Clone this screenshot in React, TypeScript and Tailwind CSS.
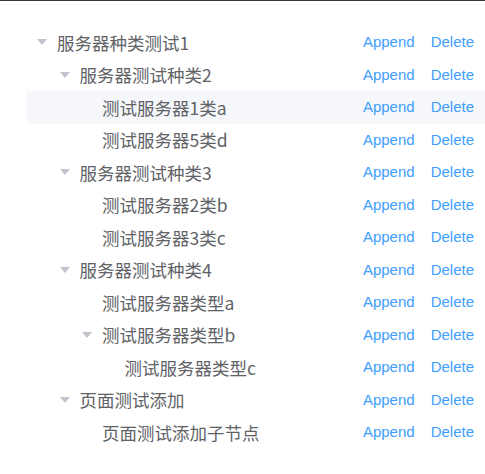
import React from "react";

type TreeNode = {
  label: string;
  children?: TreeNode[];
};

const data: TreeNode[] = [
  {
    label: "服务器种类测试1",
    children: [
      {
        label: "服务器测试种类2",
        children: [{ label: "测试服务器1类a" }, { label: "测试服务器5类d" }],
      },
      {
        label: "服务器测试种类3",
        children: [{ label: "测试服务器2类b" }, { label: "测试服务器3类c" }],
      },
      {
        label: "服务器测试种类4",
        children: [
          { label: "测试服务器类型a" },
          {
            label: "测试服务器类型b",
            children: [{ label: "测试服务器类型c" }],
          },
        ],
      },
      {
        label: "页面测试添加",
        children: [{ label: "页面测试添加子节点" }],
      },
    ],
  },
];

const HOVERED = "测试服务器1类a";

// flatten the expanded tree into rows with their depth
const flatten = (nodes: TreeNode[], level = 0): { node: TreeNode; level: number }[] =>
  nodes.flatMap((node) => [
    { node, level },
    ...(node.children ? flatten(node.children, level + 1) : []),
  ]);

const Caret: React.FC<{ visible: boolean }> = ({ visible }) => (
  <span className="w-[30px] h-full flex items-center justify-center shrink-0">
    {visible && (
      <svg width="10" height="6" viewBox="0 0 10 6">
        <path d="M0 0 L10 0 L5 6 Z" fill="#c0c4cc" />
      </svg>
    )}
  </span>
);

const TreeRow: React.FC<{ node: TreeNode; level: number }> = ({ node, level }) => {
  const hovered = node.label === HOVERED;
  return (
    <div
      className={
        "h-[32.5px] flex items-center justify-between pr-[11px] " +
        (hovered ? "bg-[#f5f7fa]" : "")
      }
      style={{ paddingLeft: level * 22.5 }}
    >
      <div className="flex items-center h-full">
        <Caret visible={!!node.children} />
        <span className="text-[17.5px] text-[#606266] font-['Noto_Sans_CJK_SC',sans-serif] leading-none">
          {node.label}
        </span>
      </div>
      <div className="flex items-center gap-[16px] text-[15px] text-[#409eff] font-['Liberation_Sans',sans-serif]">
        <span>Append</span>
        <span>Delete</span>
      </div>
    </div>
  );
};

export default function App() {
  const rows = flatten(data);
  return (
    <div className="w-[485px] h-[474px] bg-white">
      <div className="h-px bg-[#35383b]" />
      <div className="pt-[25px] pl-[27px]">
        {rows.map(({ node, level }) => (
          <TreeRow key={node.label} node={node} level={level} />
        ))}
      </div>
    </div>
  );
}
